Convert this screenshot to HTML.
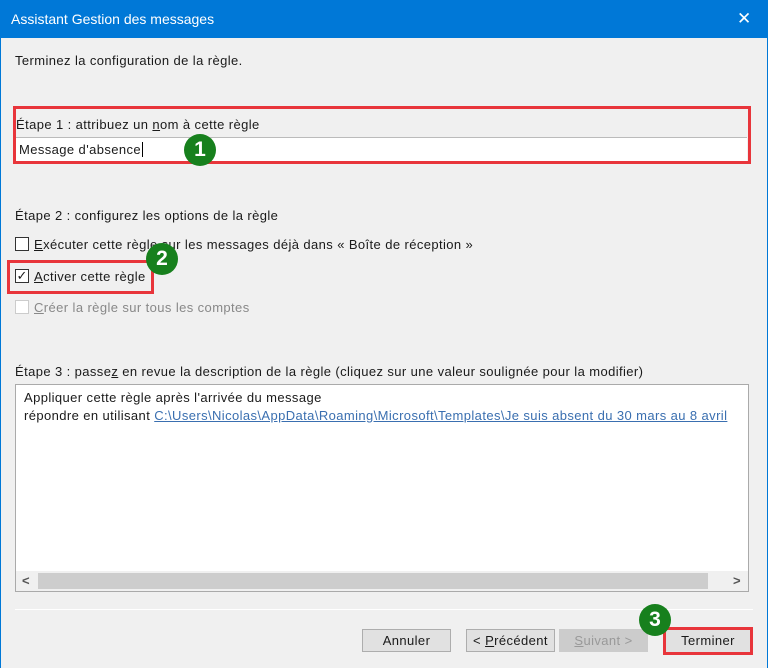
<!DOCTYPE html>
<html><head><meta charset="utf-8"><style>
*{margin:0;padding:0;box-sizing:border-box}
body{width:768px;height:668px;background:#f0f0f0;font-family:"Liberation Sans",sans-serif;font-size:13px;letter-spacing:0.4px;color:#1a1a1a;position:relative;overflow:hidden}
.a{position:absolute;white-space:nowrap}
.tb{left:0;top:0;width:768px;height:38px;background:#0078d7;color:#fff;font-size:14px;letter-spacing:0;line-height:38px;padding-left:11px}
.rb{position:absolute;border:3px solid #e8353b}
.c{position:absolute;width:32px;height:32px;border-radius:50%;background:#17801d;color:#fff;font-weight:bold;font-size:21px;letter-spacing:0;text-align:center;line-height:32px}
.cb{position:absolute;width:14px;height:14px;border:1px solid #333;background:#fff}
.btn{position:absolute;top:629px;height:23px;border:1px solid #adadad;background:#e1e1e1;text-align:center;line-height:21px}
</style></head><body>
<div class="a tb">Assistant Gestion des messages<span style="position:absolute;left:737px;top:0;font-size:17px;font-weight:300">✕</span></div>
<div class="a" style="left:0;top:38px;width:1px;height:630px;background:#0078d7"></div>
<div class="a" style="left:767px;top:38px;width:1px;height:630px;background:#0078d7"></div>
<div class="a" style="left:15px;top:53px">Terminez la configuration de la règle.</div>
<div class="rb" style="left:13px;top:106px;width:738px;height:58px"></div>
<div class="a" style="left:16px;top:117px">Étape 1 : attribuez un <u>n</u>om à cette règle</div>
<div class="a" style="left:16px;top:137px;width:731px;height:24px;background:#fff;border-top:1px solid #bbb;padding:4px 3px">Message d'absence<span style="border-left:1px solid #000;margin-left:1px"></span></div>
<div class="c" style="left:184px;top:134px">1</div>
<div class="a" style="left:15px;top:208px">Étape 2 : configurez les options de la règle</div>
<div class="cb" style="left:15px;top:237px"></div>
<div class="a" style="left:34px;top:237px"><u>E</u>xécuter cette règle sur les messages déjà dans « Boîte de réception »</div>
<div class="rb" style="left:7px;top:260px;width:147px;height:34px"></div>
<div class="cb" style="left:15px;top:269px;font-size:13px;line-height:12px;text-align:center;letter-spacing:0">✓</div>
<div class="a" style="left:34px;top:269px"><u>A</u>ctiver cette règle</div>
<div class="c" style="left:146px;top:243px">2</div>
<div class="cb" style="left:15px;top:300px;border-color:#ccc"></div>
<div class="a" style="left:34px;top:300px;color:#888"><u>C</u>réer la règle sur tous les comptes</div>
<div class="a" style="left:15px;top:364px">Étape 3 : passe<u>z</u> en revue la description de la règle (cliquez sur une valeur soulignée pour la modifier)</div>
<div class="a" style="left:15px;top:384px;width:734px;height:208px;background:#fff;border:1px solid #aaa;overflow:hidden">
<div class="a" style="left:8px;top:5px">Appliquer cette règle après l'arrivée du message</div>
<div class="a" style="left:8px;top:23px">répondre en utilisant <u style="color:#3a6fb0">C:\Users\Nicolas\AppData\Roaming\Microsoft\Templates\Je suis absent du 30 mars au 8 avril</u></div>
<div class="a" style="left:0;top:186px;width:732px;height:20px;background:#f0f0f0"></div>
<div class="a" style="left:22px;top:188px;width:670px;height:16px;background:#cdcdcd"></div>
<div class="a" style="left:6px;top:188px;font-weight:bold;color:#555">&lt;</div>
<div class="a" style="left:717px;top:188px;font-weight:bold;color:#555">&gt;</div>
</div>
<div class="a" style="left:15px;top:609px;width:738px;height:1px;background:#c8c8c8;border-bottom:1px solid #fff"></div>
<div class="btn" style="left:362px;width:89px">Annuler</div>
<div class="btn" style="left:466px;width:89px">&lt; <u>P</u>récédent</div>
<div class="btn" style="left:559px;width:89px;color:#999;border-color:#ccc;background:#ccc"><u>S</u>uivant &gt;</div>
<div class="rb" style="left:663px;top:627px;width:90px;height:28px"></div>
<div class="btn" style="left:666px;top:630px;width:84px;height:22px;border:none">Terminer</div>
<div class="c" style="left:639px;top:604px">3</div>
</body></html>
